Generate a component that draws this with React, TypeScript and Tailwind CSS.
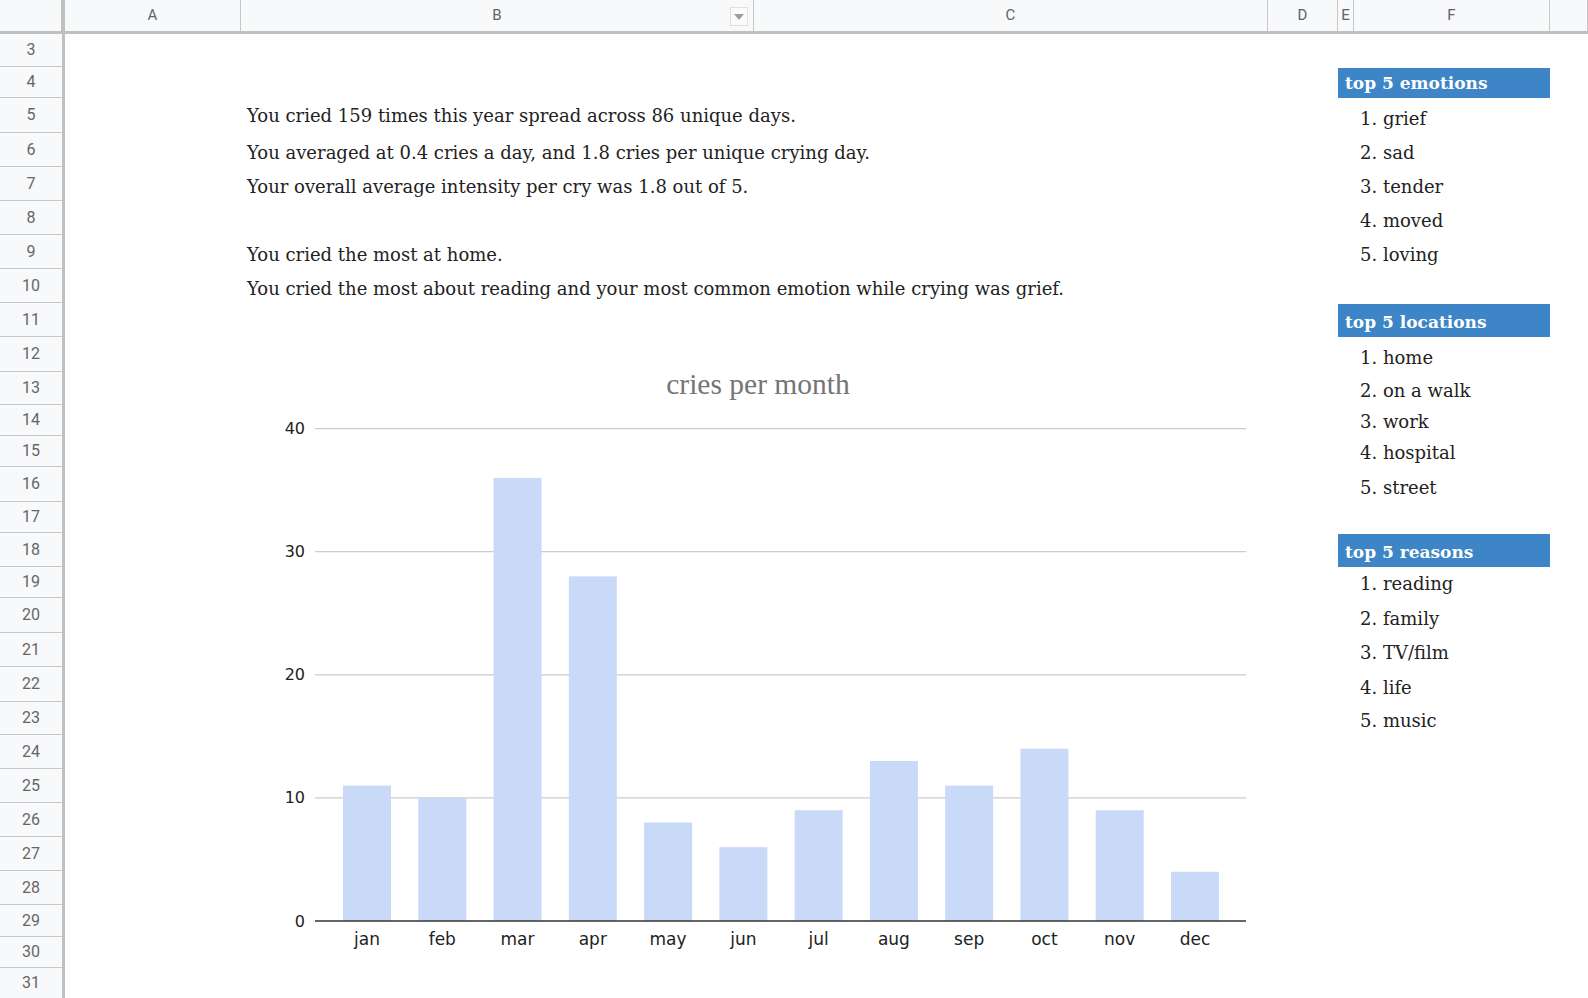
import React from 'react'

const rowNums = Array.from({ length: 29 }, (_, i) => i + 3)
const cols = [
  { label: 'A', w: 'w-[176px]' },
  { label: 'B', w: 'w-[513px]', filter: true },
  { label: 'C', w: 'w-[514px]' },
  { label: 'D', w: 'w-[70px]' },
  { label: 'E', w: 'w-[16px]' },
  { label: 'F', w: 'w-[196px]' },
  { label: '', w: 'flex-1' },
]

const months = ['jan', 'feb', 'mar', 'apr', 'may', 'jun', 'jul', 'aug', 'sep', 'oct', 'nov', 'dec']
const cries = [11, 10, 36, 28, 8, 6, 9, 13, 11, 14, 9, 4]

const ROW_TRACKS =
  'grid-rows-[33px_31px_35px_34px_34px_34px_34px_34px_34px_35px_33px_31px_31px_35px_31px_34px_31px_35px_34px_35px_33px_34px_34px_34px_34px_34px_32px_31px_31px]'

const lists = [
  { title: 'top 5 emotions', row: 'row-start-2', items: ['grief', 'sad', 'tender', 'moved', 'loving'] },
  { title: 'top 5 locations', row: 'row-start-9', items: ['home', 'on a walk', 'work', 'hospital', 'street'] },
  { title: 'top 5 reasons', row: 'row-start-16', items: ['reading', 'family', 'TV/film', 'life', 'music'] },
]

const itemRows = [
  'row-start-3', 'row-start-4', 'row-start-5', 'row-start-6', 'row-start-7',
  'row-start-10', 'row-start-11', 'row-start-12', 'row-start-13', 'row-start-14',
  'row-start-17', 'row-start-18', 'row-start-19', 'row-start-20', 'row-start-21',
]

function ColumnHeader() {
  return (
    <div className="flex h-[34px] bg-[#f8f9fa] border-b-[3px] border-[#c0c0c0] font-['Roboto',sans-serif] text-[15px] text-[#5f6368]">
      <div className="w-[65px] shrink-0 border-r-[4px] border-[#c0c0c0]" />
      {cols.map((c) => (
        <div
          key={c.label || 'g'}
          className={`${c.w} shrink-0 relative flex items-center justify-center border-r border-[#c7c7c7]`}
        >
          {c.label}
          {c.filter && (
            <div className="absolute right-[5px] top-[7px] w-[18px] h-[19px] border border-[#e0e0e0] bg-[#fbfbfb] flex items-center justify-center">
              <svg width="10" height="6" viewBox="0 0 10 6">
                <path d="M0 0h10L5 6z" fill="#9e9e9e" />
              </svg>
            </div>
          )}
        </div>
      ))}
    </div>
  )
}

function RowHeader() {
  return (
    <div
      className={`grid ${ROW_TRACKS} w-[65px] shrink-0 bg-[#f8f9fa] border-r-[3px] border-[#c0c0c0] font-['Roboto',sans-serif] text-[16px] text-[#666]`}
    >
      {rowNums.map((n) => (
        <div key={n} className="flex items-center justify-center border-b border-[#c7c7c7]">
          {n}
        </div>
      ))}
    </div>
  )
}

function Chart() {
  const y0 = 576
  const unit = 12.31
  const y = (v: number) => y0 - v * unit
  return (
    <div className="absolute left-[250px] top-[345px] w-[1010px] h-[620px] bg-white">
      <svg width="1010" height="620" viewBox="0 0 1010 620">
        <text
          x="508"
          y="39"
          textAnchor="middle"
          dominantBaseline="central"
          fontFamily="'Liberation Serif', serif"
          fontSize="29.5"
          fill="#757575"
        >
          cries per month
        </text>
        {[10, 20, 30, 40].map((v) => (
          <line key={v} x1="65" x2="996" y1={y(v)} y2={y(v)} stroke="#cccccc" strokeWidth="1.2" />
        ))}
        {[0, 10, 20, 30, 40].map((v) => (
          <text
            key={v}
            x="55"
            y={y(v)}
            textAnchor="end"
            dominantBaseline="central"
            fontFamily="'DejaVu Sans', Verdana, sans-serif"
            fontSize="16"
            fill="#222"
          >
            {v}
          </text>
        ))}
        {cries.map((v, i) => {
          const cx = 117 + i * 75.27
          return (
            <g key={months[i]}>
              <rect x={cx - 24} y={y(v)} width="48" height={v * unit} fill="#c9daf8" />
              <text
                x={cx}
                y="594"
                textAnchor="middle"
                dominantBaseline="central"
                fontFamily="'DejaVu Sans', Verdana, sans-serif"
                fontSize="17"
                fill="#222"
              >
                {months[i]}
              </text>
            </g>
          )
        })}
        <line x1="65" x2="996" y1={y0} y2={y0} stroke="#333" strokeWidth="1.5" />
      </svg>
    </div>
  )
}

export default function App() {
  return (
    <div className="relative w-[1588px] h-[998px] overflow-hidden bg-white">
      <ColumnHeader />
      <div className="flex">
        <RowHeader />
        <div
          className={`grid ${ROW_TRACKS} grid-cols-[176px_513px_514px_70px_16px_196px_1fr] flex-1 font-['DejaVu_Serif',serif] text-[18px] text-[#222]`}
        >
          {/* summary text, col B */}
          <div className="row-start-3 col-start-2 flex items-center pl-[6px] whitespace-nowrap">
            You cried 159 times this year spread across 86 unique days.
          </div>
          <div className="row-start-4 col-start-2 flex items-end pb-[1px] pl-[6px] whitespace-nowrap">
            You averaged at 0.4 cries a day, and 1.8 cries per unique crying day.
          </div>
          <div className="row-start-5 col-start-2 flex items-end pb-[1px] pl-[6px] whitespace-nowrap">
            Your overall average intensity per cry was 1.8 out of 5.
          </div>
          <div className="row-start-7 col-start-2 flex items-end pb-[1px] pl-[6px] whitespace-nowrap">
            You cried the most at home.
          </div>
          <div className="row-start-8 col-start-2 flex items-end pb-[1px] pl-[6px] whitespace-nowrap">
            You cried the most about reading and your most common emotion while crying was grief.
          </div>

          {/* top 5 lists, cols E-F */}
          {lists.map((l) => (
            <div
              key={l.title}
              className={`${l.row} col-start-5 col-span-2 mt-[1px] bg-[#3d85c6] text-white text-[17px] font-bold flex items-end pb-[2px] pl-[7px] whitespace-nowrap`}
            >
              {l.title}
            </div>
          ))}
          {lists.flatMap((l, li) =>
            l.items.map((it, i) => (
              <div
                key={l.title + it}
                className={`${itemRows[li * 5 + i]} col-start-6 flex items-end pb-[1px] pl-[6px] whitespace-nowrap`}
              >
                {i + 1}. {it}
              </div>
            )),
          )}
        </div>
      </div>
      <Chart />
    </div>
  )
}
